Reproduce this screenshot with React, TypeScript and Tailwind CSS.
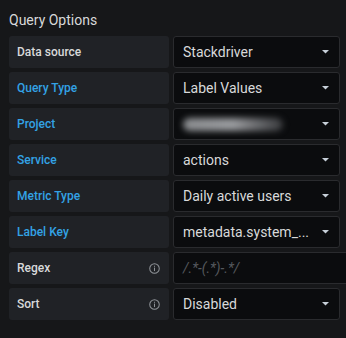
import React from 'react';

type Row = {
  label: string;
  blue?: boolean;
  info?: boolean;
  value?: string;
  placeholder?: string;
  blurred?: boolean;
};

const rows: Row[] = [
  { label: 'Data source', value: 'Stackdriver' },
  { label: 'Query Type', blue: true, value: 'Label Values' },
  { label: 'Project', blue: true, blurred: true },
  { label: 'Service', blue: true, value: 'actions' },
  { label: 'Metric Type', blue: true, value: 'Daily active users' },
  { label: 'Label Key', blue: true, value: 'metadata.system_...' },
  { label: 'Regex', info: true, placeholder: '/.*-(.*)-.*/' },
  { label: 'Sort', info: true, value: 'Disabled' },
];

function Caret() {
  return (
    <svg width="7" height="4" viewBox="0 0 7 4" className="shrink-0">
      <path d="M0 0 H7 L3.5 3.5 Z" fill="#c7d0d9" />
    </svg>
  );
}

function InfoIcon() {
  return (
    <svg width="11" height="11" viewBox="0 0 12 12" className="shrink-0">
      <circle cx="6" cy="6" r="5.2" fill="none" stroke="#8f9398" strokeWidth="1.1" />
      <rect x="5.45" y="5" width="1.1" height="3.8" fill="#8f9398" />
      <rect x="5.45" y="3" width="1.1" height="1.1" fill="#8f9398" />
    </svg>
  );
}

export default function App() {
  return (
    <div className="w-[346px] h-[338px] bg-[#161719] overflow-hidden pl-[9px] pt-[10px] font-['Roboto',sans-serif]">
      <h3 className="text-[14px] leading-[20px] text-[#d8d9da] mb-[6px]">Query Options</h3>
      <div className="flex flex-col gap-[4px]">
        {rows.map((r) => (
          <div key={r.label} className="flex gap-[4px] h-[32px]">
            <div className="w-[160px] shrink-0 rounded-[3px] bg-[#202226] flex items-center justify-between pl-[8px] pr-[9px]">
              <span
                className={`text-[12px] font-medium ${r.blue ? 'text-[#33a2e5]' : 'text-[#d8d9da]'}`}
              >
                {r.label}
              </span>
              {r.info && <InfoIcon />}
            </div>
            <div
              className={`${r.placeholder !== undefined ? 'w-[180px]' : 'w-[167px]'} shrink-0 rounded-[3px] bg-[#0b0c0e] border border-[#2a2b2e] flex items-center justify-between pl-[9px] pr-[10px]`}
            >
              {r.blurred ? (
                <div className="w-[100px] h-[13px] rounded-full bg-gradient-to-r from-[#8a8c8f] via-[#9a9c9f] to-[#3a3b3e] blur-[3px]" />
              ) : r.placeholder !== undefined ? (
                <span className="text-[14px] italic text-[#55585d]">{r.placeholder}</span>
              ) : (
                <span className="text-[14px] text-[#d8d9da] whitespace-nowrap">{r.value}</span>
              )}
              {r.placeholder === undefined && <Caret />}
            </div>
          </div>
        ))}
      </div>
    </div>
  );
}
